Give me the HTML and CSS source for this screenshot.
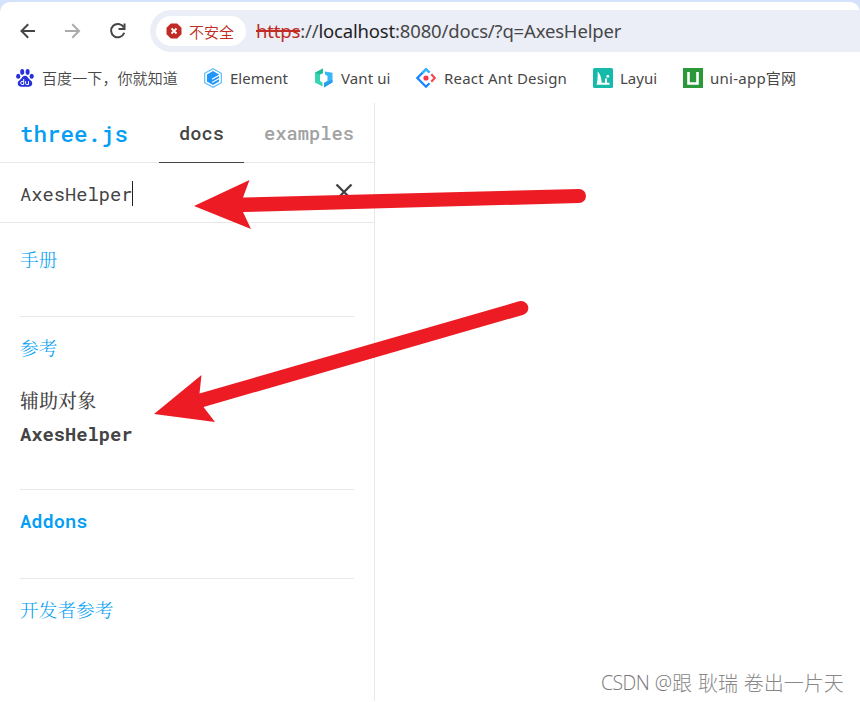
FILE: index.html
```html
<!DOCTYPE html>
<html lang="zh-CN">
<head>
<meta charset="utf-8">
<title>three.js docs</title>
<link rel="stylesheet" href="styles.css">
</head>
<body>
<div class="window">
<header class="browser">
  <div class="toolbar">
    <svg class="nav back" width="18" height="18" viewBox="0 0 18 18"><path d="M16 9H3M9.2 2.3L2.5 9l6.7 6.7"/></svg>
    <svg class="nav forward" width="18" height="18" viewBox="0 0 18 18"><path d="M1 9h13M8.300 2.300L15 9l-6.700 6.700"/></svg>
    <svg class="nav reload" width="18" height="18" viewBox="0 0 18 18"><path d="M14.600 5.200A6.700 6.700 0 1 0 15.200 10.700M15.500 1.500v5.500h-6"/></svg>
    <div class="address">
      <div class="chip">
        <svg width="16" height="16" viewBox="0 0 16 16"><path fill="#c02b25" d="M4.800.500h6.400l4.300 4.300v6.400l-4.300 4.300H4.800L.500 11.200V4.800z"/><path d="M5.500 5.500l5 5M10.500 5.500l-5 5" stroke="#fff" stroke-width="1.800"/></svg>
        <span class="chip-label">不安全</span>
      </div>
      <div class="url"><span class="scheme">https</span>://<span class="host">localhost</span>:8080/docs/?q=AxesHelper</div>
    </div>
  </div>
  <nav class="bookmarks">
    <a class="bm bm1"><svg width="18" height="18" viewBox="0 0 18 18" fill="#2630dc"><ellipse cx="6.200" cy="2.900" rx="2" ry="2.800"/><ellipse cx="11.600" cy="2.900" rx="2" ry="2.800"/><ellipse cx="2.200" cy="7.300" rx="2.100" ry="2.500"/><ellipse cx="15.700" cy="7.300" rx="2.100" ry="2.500"/><path d="M9 6.700c2.200 0 3 2.200 4.400 3.600s3.200 2.500 2.800 4.700c-.5 3.200-3.900 2.900-7.200 2.800-3.300.1-6.700.4-7.200-2.800-.4-2.200 1.400-3.300 2.800-4.700S6.800 6.700 9 6.700z"/><path d="M7.700 10v5.500H5.900q-1.200-.2-1.200-1.600t1.200-1.500h1.800M9.600 12.200v2.200q0 1.100 1.100 1.100h1.800v-3.300" fill="none" stroke="#fff"/></svg><span>百度一下，你就知道</span></a>
    <a class="bm bm2"><svg width="20" height="20" viewBox="0 0 20 20"><path d="M10 .700l8.300 4.600v9.400L10 19.300l-8.300-4.600V5.300z" fill="#fff" stroke="#55b7fc" stroke-width="1.100"/><path d="M10 3l6 3.400v7.200L10 17l-6-3.400V6.400z" fill="#2196fa"/><path d="M16.200 7.300L9 11.300M16.200 10.500L9 14.500" stroke="#fff" stroke-width="1.100"/></svg><span>Element</span></a>
    <a class="bm bm3"><svg width="20" height="20" viewBox="0 0 20 20"><path d="M9 0.500v4.500L6 6.500v6.500L8.500 14.500v4L1 14.500V4.700z" fill="#36d5b1"/><path d="M1 4.700L9 .500v4.500L6 6.500z" fill="#20b99a"/><path d="M11 3.500l7.500 1.300v9.500L10 19.500v-4.500l3.500-2.200V8L11 6.500z" fill="#38b6fa"/><path d="M10 15l8.500-3.200v2.500L10 19.500z" fill="#2a9def"/></svg><span>Vant ui</span></a>
    <a class="bm bm4"><svg width="20" height="20" viewBox="0 0 20 20" fill="none" stroke-width="2.200"><path d="M13.500 4.500L10 1.200 1.400 10l8.600 8.700 3.500-3.500" stroke="#1683ff"/><path d="M13.500 4.500L10 1.200 6.400 5" stroke="#35b7ff"/><path d="M15.300 6.300L18.800 10l-3.500 3.700" stroke="#f74652"/><circle cx="10" cy="10" r="2.600" fill="#f43b4d"/></svg><span>React Ant Design</span></a>
    <a class="bm bm5"><svg width="20" height="20" viewBox="0 0 20 20"><rect width="20" height="20" rx="1.500" fill="#16baaa"/><path d="M3.500 16.700Q5 12 4.600 3.500Q8 6 8.700 14.700h3.300v-4.200h2v4.200h2.500v2z" fill="#fff"/><circle cx="14.800" cy="8.300" r="1.400" fill="#fff"/></svg><span>Layui</span></a>
    <a class="bm bm6"><svg width="20" height="20" viewBox="0 0 20 20"><rect width="20" height="20" fill="#2b9939"/><path d="M5.500 4v11.500h9V4" fill="none" stroke="#fff" stroke-width="2.600"/></svg><span>uni-app官网</span></a>
  </nav>
</header>
<main class="page">
  <aside class="panel">
    <div class="head">
      <h1><span>three.js</span></h1>
      <div class="tab active"><span>docs</span></div>
      <div class="tab"><span>examples</span></div>
    </div>
    <div class="search">
      <span class="query">AxesHelper</span><i class="caret"></i>
      <svg class="clear" width="18" height="18" viewBox="0 0 18 18"><path d="M1.500 1.500l15 15M16.500 1.500l-15 15"/></svg>
    </div>
    <div class="content">
      <section class="s1"><h2>手册</h2></section>
      <section class="s2"><h2>参考</h2><h3>辅助对象</h3><a class="result">AxesHelper</a></section>
      <section class="s3"><h2 class="latin">Addons</h2></section>
      <section class="s4"><h2>开发者参考</h2></section>
    </div>
  </aside>
</main>
<svg class="arrows" width="860" height="702" viewBox="0 0 860 702" fill="#ed1c24">
  <path d="M194 206L249.500 180 243 197.500 579 189A7 7 0 0 1 579 203L243 212 251 229z"/>
  <path d="M154 414L201.500 375 199.500 393.500 519 301.300A7 7 0 0 1 523.500 314.700L203.500 407 215 422z"/>
</svg>
<div class="watermark"><span class="wm-latin">CSDN @</span>跟 耿瑞 卷出一片天</div>
</div>
</body>
</html>
```
FILE: styles.css
```css
* { box-sizing: border-box; }
body { margin: 0; background: #fff; color: #444; }
.window { position: relative; width: 860px; height: 702px; overflow: hidden; display: flex; flex-direction: column; }
.browser { height: 103px; background: linear-gradient(#d5e2fb, #d5e2fb) 0 0 / 100% 12px no-repeat; padding-top: 2px; flex: none; font-family: "Noto Sans", "Noto Sans CJK SC", sans-serif; }
.toolbar { height: 58px; background: #fff; border-radius: 10px 10px 0 0; display: flex; align-items: center; padding-left: 19px; }
.nav { flex: none; fill: none; stroke: #444; stroke-width: 2; }
.forward { margin-left: 27px; stroke: #aaa; }
.reload { margin-left: 27px; }
.address { margin-left: 23px; flex: 1; height: 42px; background: #ebeef7; border-radius: 21px 0 0 21px; display: flex; align-items: center; padding-left: 6px; }
.chip { width: 90px; height: 30px; border-radius: 15px; background: #fff; display: flex; align-items: center; padding-left: 10px; color: #c02b25; font-size: 15px; font-weight: 350; }
.chip-label { margin-left: 7px; white-space: nowrap; }
.url { margin-left: 10px; font-size: 18.500px; letter-spacing: -.17px; white-space: nowrap; color: #474747; padding-bottom: 1px; }
.scheme { color: #c02b25; text-decoration: line-through 2px; }
.host { color: #1f1f1f; }
.bookmarks { height: 43px; display: flex; align-items: center; padding: 0 0 8px 16px; font-size: 15px; color: #474747; }
.bm { display: flex; align-items: center; white-space: nowrap; }
.bm svg { flex: none; margin-right: 7px; }
.bm1 { width: 187px; font-weight: 350; letter-spacing: .1px; }
.bm1 svg { margin-right: 8px; }
.bm2 { width: 111px; }
.bm3 { width: 102px; letter-spacing: .1px; }
.bm4 { width: 177px; letter-spacing: .2px; }
.bm4 svg { margin-right: 8px; }
.bm5 { width: 90px; }
.bm6 { letter-spacing: .25px; }
.page { flex: 1; display: flex; }
.panel { width: 375px; height: 598px; border-right: 1px solid #e8e8e8; font-family: "Roboto Mono", "DejaVu Sans Mono", monospace; }
.head { height: 60px; border-bottom: 1px solid #e8e8e8; padding-left: 20px; display: flex; align-items: flex-start; }
h1 { margin: 0; width: 139px; font-size: 22.500px; line-height: 61px; font-weight: 500; color: #049ef4; }
.tab { height: 60px; padding: 0 20px; font-size: 18.750px; line-height: 59px; font-weight: 500; color: #a2a2a2; }
.tab.active { width: 85px; color: #444; border-bottom: 1px solid #444; }
.search { height: 60px; border-bottom: 1px solid #e8e8e8; padding: 0 21px 0 20px; display: flex; align-items: center; font-size: 18.750px; }
.query { width: 112px; line-height: 60px; padding-top: 2px; font-weight: 450; }
.caret { width: 1px; height: 25px; background: #222; margin-top: 2px; }
.clear { margin-left: auto; margin-bottom: 2px; fill: none; stroke: #444; stroke-width: 2.400; }
.content { padding: 0 20px; }
section { border-bottom: 1px solid #e8e8e8; }
h2 { margin: 0; padding-top: 18px; font: 300 18.600px/36px "Noto Serif CJK SC", "Noto Sans CJK SC", serif; letter-spacing: .1px; color: #049ef4; }
h2.latin { font: 600 18.750px/36px "Roboto Mono", "DejaVu Sans Mono", monospace; letter-spacing: 0; padding-top: 13px; }
h3 { margin: 17px 0 0; font: 500 18.750px/36px "Noto Serif CJK SC", "Noto Sans CJK SC", serif; letter-spacing: .4px; }
.result { display: block; font-size: 18.750px; line-height: 32px; font-weight: 700; }
.s1 { height: 94px; }
.s2 { height: 173px; }
.s2 h2, .s4 h2 { padding-top: 12px; }
.s3 { height: 89px; }
.s4 { border: 0; }
.arrows { position: absolute; left: 0; top: 0; }
.watermark { position: absolute; left: 601px; top: 669px; display: flex; font: 300 20px/28px "Noto Sans CJK SC", sans-serif; color: #888; white-space: pre; word-spacing: 1.500px; }
.wm-latin { width: 71px; font-family: "Open Sans", sans-serif; font-weight: 300; font-size: 19.500px; letter-spacing: -.6px; word-spacing: 1px; color: #777; }
```
